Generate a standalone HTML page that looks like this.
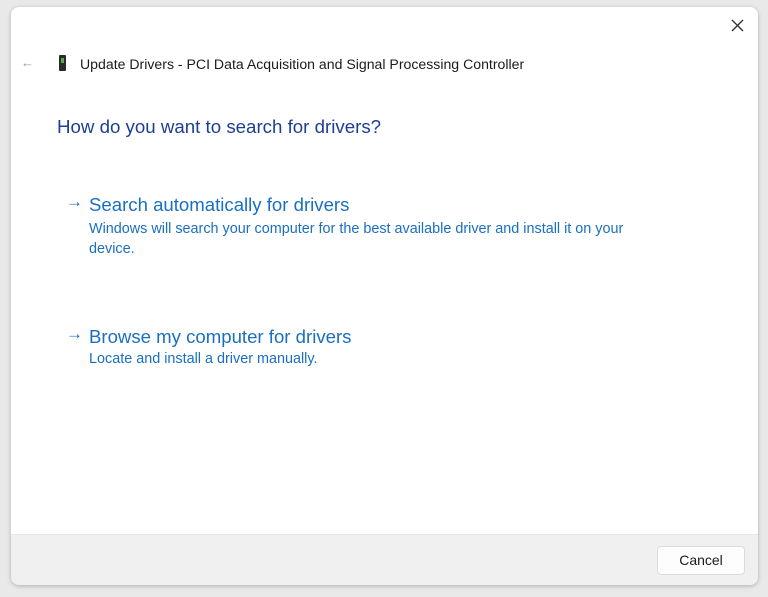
<!DOCTYPE html>
<html><head><style>
body{margin:0;width:768px;height:597px;background:#e9e9e9;font-family:"Liberation Sans",sans-serif;position:relative;overflow:hidden}
.win{position:absolute;left:11px;top:7px;width:747px;height:578px;background:#fff;border-radius:8px;box-shadow:0 1px 4px rgba(0,0,0,.25);overflow:hidden}
.foot{position:absolute;left:0;right:0;bottom:0;height:50px;background:#f0f0f0;border-top:1px solid #e6e6e6}
.btn{position:absolute;right:13px;top:11px;width:86px;height:27px;background:#fdfdfd;border:1px solid #dcdcdc;border-radius:4px;font-size:14px;color:#1b1b1b;text-align:center;line-height:27px}
.t{position:absolute;white-space:nowrap}
</style></head><body>
<div class="win">
<svg style="position:absolute;left:720px;top:12px" width="13" height="13"><path d="M1 1L12 12M12 1L1 12" stroke="#333" stroke-width="1.4"/></svg>
<div class="t" style="left:10px;top:48px;font-size:13px;color:#999">←</div>
<div style="position:absolute;left:48px;top:48px;width:7px;height:16px;background:#2a2a2a;border-radius:1px"><div style="margin:3px 2px;width:3px;height:5px;background:#4caf50"></div></div>
<div class="t" style="left:69px;top:49px;font-size:14.1px;color:#1b1b1b">Update Drivers - PCI Data Acquisition and Signal Processing Controller</div>
<div class="t" style="left:46px;top:109px;font-size:18.7px;color:#1c3f94">How do you want to search for drivers?</div>
<div class="t" style="left:55px;top:185px;font-size:17px;color:#1a6fc0">→</div>
<div class="t" style="left:78px;top:187px;font-size:18.6px;color:#1a6fc0">Search automatically for drivers</div>
<div class="t" style="left:78px;top:212px;font-size:14.4px;color:#1a6fc0;line-height:20px;white-space:normal;width:560px">Windows will search your computer for the best available driver and install it on your device.</div>
<div class="t" style="left:55px;top:317px;font-size:17px;color:#1a6fc0">→</div>
<div class="t" style="left:78px;top:319px;font-size:18.6px;color:#1a6fc0">Browse my computer for drivers</div>
<div class="t" style="left:78px;top:344px;font-size:14.4px;color:#1a6fc0">Locate and install a driver manually.</div>
<div class="foot"><div class="btn">Cancel</div></div>
</div>
</body></html>
